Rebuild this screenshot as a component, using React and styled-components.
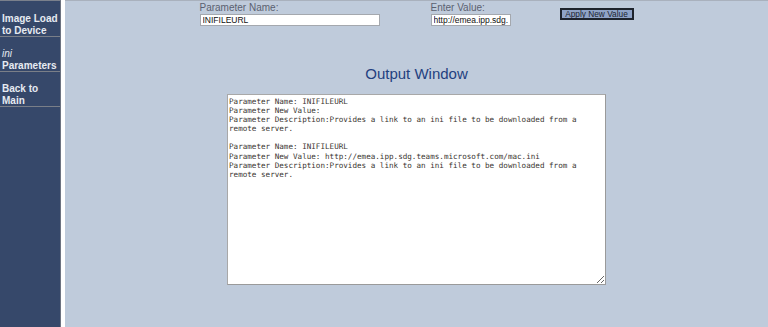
import styled, { createGlobalStyle } from "styled-components";

// ── Global ─────────────────────────────────────────────────────

const Global = createGlobalStyle`
   html, body {
      margin: 0;
      padding: 0;
      background: #bfcbdb;
   }
   #root {
      height: 100vh;
   }
`;

// ── Styled ─────────────────────────────────────────────────────

const Page = styled.div`
   display: flex;
   height: 100%;
   font-family: "Liberation Sans", Arial, sans-serif;
`;

const Sidebar = styled.nav`
   width: 61px;
   flex-shrink: 0;
   background: #36486a;
   border-right: 1px solid #6d7380;
   border-top: 1px solid #7a808c;
   box-sizing: border-box;
   display: flex;
   flex-direction: column;
   padding-top: 1px;
`;

const NavItem = styled.a`
   display: block;
   height: 35px;
   box-sizing: border-box;
   padding: 11px 0 0 2px;
   border-bottom: 1px solid #7a7f88;
   color: #e6ebf2;
   font-size: 10px;
   line-height: 11.5px;
   font-weight: bold;
   text-decoration: none;
   cursor: pointer;

   em {
      font-weight: normal;
   }
`;

const Gap = styled.div`
   width: 4px;
   flex-shrink: 0;
   background: #ffffff;
`;

const Main = styled.main`
   flex: 1;
   background: #bfcbdb;
   border-top: 1px solid #a9b1bd;
   display: flex;
   flex-direction: column;
   align-items: center;
   padding-top: 1px;
`;

const Form = styled.div`
   display: grid;
   grid-template-columns: 231px 129px 74px;
   align-items: center;
`;

const Field = styled.div`
   display: flex;
   flex-direction: column;
   margin-right: ${({ $gap }) => $gap}px;
`;

const Label = styled.label`
   font-size: 10px;
   line-height: 11px;
   color: #5b6170;
   height: 11px;
   margin-bottom: 1px;
`;

const Input = styled.input`
   box-sizing: border-box;
   width: 100%;
   height: 12px;
   margin: 0;
   padding: 0 2px;
   border: 1px solid #a4a8ae;
   background: #ffffff;
   font-family: "Liberation Sans", Arial, sans-serif;
   font-size: 8.5px;
   color: #111;
   outline: none;
`;

const ApplyBtn = styled.button`
   box-sizing: border-box;
   width: 74px;
   height: 12px;
   margin: 0;
   padding: 0;
   background: #8fa3c7;
   border: 2px solid #1e232c;
   color: #1d2330;
   font-family: "Liberation Sans", Arial, sans-serif;
   font-size: 8.3px;
   line-height: 8px;
   cursor: pointer;
   align-self: center;
`;

const Title = styled.h2`
   margin: 39px 0 0;
   font-size: 15px;
   line-height: 17px;
   font-weight: normal;
   color: #1f4180;
`;

const Output = styled.textarea`
   box-sizing: border-box;
   width: 379px;
   height: 191px;
   margin-top: 12px;
   padding: 2px 1px;
   border: 1px solid #a8a8a8;
   border-right-color: #9a9a9a;
   border-bottom-color: #9a9a9a;
   background: #ffffff;
   font-family: "DejaVu Sans Mono", "Liberation Mono", monospace;
   font-size: 7.6px;
   line-height: 9.1px;
   color: #3a3530;
   outline: none;
`;

// ── Data ───────────────────────────────────────────────────────

const OUTPUT_TEXT = [
   "Parameter Name: INIFILEURL",
   "Parameter New Value:",
   "Parameter Description:Provides a link to an ini file to be downloaded from a",
   "remote server.",
   "",
   "Parameter Name: INIFILEURL",
   "Parameter New Value: http://emea.ipp.sdg.teams.microsoft.com/mac.ini",
   "Parameter Description:Provides a link to an ini file to be downloaded from a",
   "remote server.",
].join("\n");

// ── Component ─────────────────────────────────────────────────

const App = () => (
   <>
      <Global />
      <Page>
         <Sidebar>
            <NavItem>
               Image Load
               <br />
               to Device
            </NavItem>
            <NavItem>
               <em>ini</em>
               <br />
               Parameters
            </NavItem>
            <NavItem>
               Back to
               <br />
               Main
            </NavItem>
         </Sidebar>
         <Gap />
         <Main>
            <Form>
               <Field $gap={51}>
                  <Label>Parameter Name:</Label>
                  <Input defaultValue="INIFILEURL" />
               </Field>
               <Field $gap={49}>
                  <Label>Enter Value:</Label>
                  <Input defaultValue="http://emea.ipp.sdg.teams.microsoft.com/mac.ini" />
               </Field>
               <ApplyBtn>Apply New Value</ApplyBtn>
            </Form>
            <Title>Output Window</Title>
            <Output readOnly defaultValue={OUTPUT_TEXT} />
         </Main>
      </Page>
   </>
);

export default App;
